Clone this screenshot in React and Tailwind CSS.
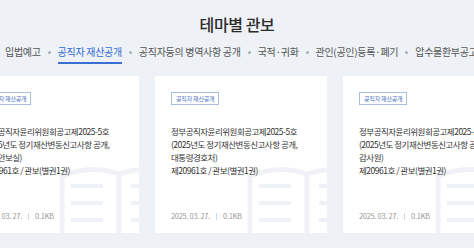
import React from "react";

const cards = [
  { l3: "국가안보실)" },
  { l3: "대통령경호처)" },
  { l3: "감사원)" },
];

function Book() {
  return (
    <svg
      className="absolute left-[92px] top-[86px]"
      width="130"
      height="80"
      viewBox="0 0 130 80"
      fill="none"
    >
      <path d="M3 80 V14 Q32 2 60 12 V80" stroke="#f0f2f7" strokeWidth="5" />
      <path d="M60 12 Q88 2 118 14 V80" stroke="#f0f2f7" strokeWidth="5" />
      <path d="M12 24 H44 M12 41 H44 M12 58 H44" stroke="#eef1f6" strokeWidth="4" />
      <path d="M72 24 H106 M72 41 H106 M72 58 H106" stroke="#eef1f6" strokeWidth="4" />
    </svg>
  );
}

function Card({ l3 }) {
  return (
    <div className="relative w-[172px] h-[157px] shrink-0 bg-white overflow-hidden flex flex-col px-4 pt-4 pb-[11px]">
      <Book />
      <div className="relative self-start h-[13px] px-[4px] border border-[#a9bce4] text-[6px] leading-[11px] text-[#4b74c6] tracking-[-0.2px]">
        공직자 재산공개
      </div>
      <div className="relative mt-[20px] text-[8.5px] leading-[13px] tracking-[-0.5px] text-[#333] whitespace-nowrap">
        정부공직자윤리위원회공고제2025-5호
        <br />
        (2025년도 정기재산변동신고사항 공개,
        <br />
        {l3}
        <br />
        제20961호 / 관보(별권1권)
      </div>
      <div className="relative mt-auto flex items-center text-[7.5px] leading-[12px] tracking-[-0.3px] text-[#9a9a9a]">
        <span>2025. 03. 27.</span>
        <span className="mx-[6px] w-px h-[7px] bg-[#d5d8dd]" />
        <span>0.1KB</span>
      </div>
    </div>
  );
}

export default function App() {
  const tabs = [
    "입법예고",
    "공직자 재산공개",
    "공직자등의 병역사항 공개",
    "국적·귀화",
    "관인(공인)등록·폐기",
    "압수물환부공고",
  ];
  return (
    <div
      className="w-[474px] h-[248px] overflow-hidden bg-[#eef1f6]"
      style={{ fontFamily: "'Noto Sans CJK KR', 'Noto Sans', sans-serif" }}
    >
      <div className="pt-[14px] text-center text-[16px] leading-[20px] tracking-[-0.4px] font-medium text-[#2b2b2b]">
        테마별 관보
      </div>
      <div className="mt-[11px] pl-[5px] flex items-start gap-[7px] whitespace-nowrap text-[10px] leading-[14px] tracking-[-0.3px] text-[#555]">
        {tabs.map((t, i) => (
          <React.Fragment key={t}>
            {i > 0 && (
              <span className="h-[14px] flex items-center">
                <span className="w-[3px] h-[3px] rounded-full bg-[#a8b0bc]" />
              </span>
            )}
            <span
              className={
                i === 1
                  ? "shrink-0 text-[#2f6bd6] pb-[3px] border-b-2 border-[#3a70d4]"
                  : "shrink-0"
              }
            >
              {t}
            </span>
          </React.Fragment>
        ))}
      </div>
      <div className="mt-[12px] ml-[-33px] flex gap-4">
        {cards.map((c, i) => (
          <Card key={i} l3={c.l3} />
        ))}
      </div>
    </div>
  );
}
